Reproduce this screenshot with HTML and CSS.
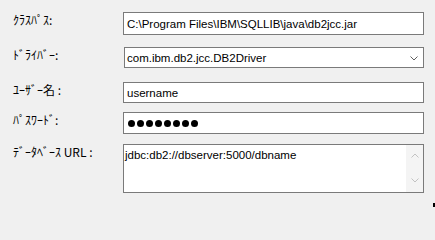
FILE: index.html
```html
<!DOCTYPE html>
<html lang="ja">
<head>
<meta charset="utf-8">
<title>DB2 接続</title>
<link rel="stylesheet" href="styles.css">
</head>
<body>
<div class="form">
  <div class="row">
    <div class="lbl">ｸﾗｽﾊﾟｽ:</div>
    <div class="box h23">C:\Program Files\IBM\SQLLIB\java\db2jcc.jar</div>
  </div>
  <div class="row gap12">
    <div class="lbl">ﾄﾞﾗｲﾊﾞｰ:</div>
    <div class="box combo h21">
      <span>com.ibm.db2.jcc.DB2Driver</span>
      <svg class="chev" width="8" height="5" viewBox="0 0 8 5"><polyline points="0.5,0.5 4,4 7.5,0.5" fill="none" stroke="#606060" stroke-width="1"/></svg>
    </div>
  </div>
  <div class="row gap14">
    <div class="lbl">ﾕｰｻﾞｰ名 :</div>
    <div class="box h21">username</div>
  </div>
  <div class="row gap9">
    <div class="lbl">ﾊﾟｽﾜｰﾄﾞ:</div>
    <div class="box pw h22" aria-label="パスワード">
      <span class="dot"></span><span class="dot"></span><span class="dot"></span><span class="dot"></span><span class="dot"></span><span class="dot"></span><span class="dot"></span><span class="dot"></span>
    </div>
  </div>
  <div class="row gap10">
    <div class="lbl">ﾃﾞｰﾀﾍﾞｰｽ URL :</div>
    <div class="box area h49">
      <div class="areatext">jdbc:db2://dbserver:5000/dbname</div>
      <div class="sbar">
        <svg width="8" height="5" viewBox="0 0 8 5"><polyline points="0.5,4.5 4,1 7.5,4.5" fill="none" stroke="#c2c2c2" stroke-width="1"/></svg>
        <svg width="8" height="5" viewBox="0 0 8 5"><polyline points="0.5,0.5 4,4 7.5,0.5" fill="none" stroke="#c2c2c2" stroke-width="1"/></svg>
      </div>
    </div>
  </div>
</div>
<div class="corner"></div>
</body>
</html>
```
FILE: styles.css
```css
html, body {
  margin: 0;
  padding: 0;
}
body {
  background: #f0f0f0;
  width: 435px;
  height: 207px;
  overflow: hidden;
  position: relative;
}
.form {
  display: flex;
  flex-direction: column;
  padding: 12px 0 0 13px;
}
.row {
  display: flex;
  align-items: flex-start;
}
.gap12 { margin-top: 12px; }
.gap14 { margin-top: 14px; }
.gap9 { margin-top: 9px; }
.gap10 { margin-top: 10px; }
.lbl {
  width: 110px;
  flex: none;
  font-family: "Noto Sans CJK JP", sans-serif;
  font-size: 12px;
  line-height: 12px;
  padding-top: 2px;
  color: #000;
  white-space: nowrap;
}
.box {
  width: 301px;
  box-sizing: border-box;
  border: 1px solid #7a7a7a;
  background: #fff;
  font-family: "Liberation Sans", Arial, sans-serif;
  font-size: 11.5px;
  color: #000;
  display: flex;
  align-items: center;
  padding-left: 3px;
  white-space: nowrap;
}
.h23 { height: 23px; }
.h22 { height: 22px; }
.h21 { height: 21px; }
.h49 { height: 49px; }
.combo {
  width: 300px;
  margin-left: 1px;
  padding-left: 2px;
  padding-right: 5px;
  justify-content: space-between;
}
.chev {
  display: block;
  margin-top: 1px;
}
.pw {
  padding-left: 4px;
  gap: 2px;
}
.dot {
  width: 7px;
  height: 7px;
  border-radius: 50%;
  background: #000;
  flex: none;
}
.area {
  align-items: stretch;
  padding-left: 1px;
}
.areatext {
  flex: 1;
  padding-top: 3px;
  line-height: 14px;
}
.sbar {
  width: 17px;
  flex: none;
  background: #f4f4f4;
  display: flex;
  flex-direction: column;
  justify-content: space-between;
  align-items: center;
  padding: 8px 0 9px;
  box-sizing: border-box;
}
.sbar svg {
  display: block;
}
.corner {
  position: absolute;
  left: 433px;
  top: 203px;
  width: 2px;
  height: 4px;
  background: #000;
}
```
